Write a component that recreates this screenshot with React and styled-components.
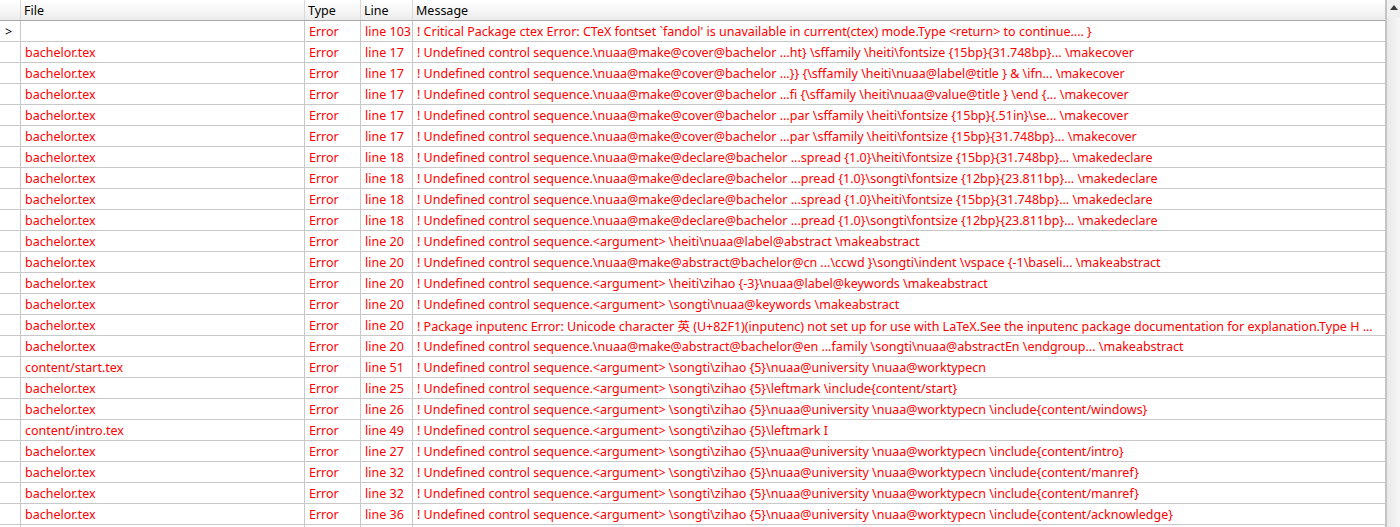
import styled, { createGlobalStyle } from "styled-components";

const entries = [
  { file: "", line: "line 103", msg: "! Critical Package ctex Error: CTeX fontset `fandol' is unavailable in current(ctex) mode.Type <return> to continue.... }", current: true },
  { file: "bachelor.tex", line: "line 17", msg: "! Undefined control sequence.\\nuaa@make@cover@bachelor ...ht} \\sffamily \\heiti\\fontsize {15bp}{31.748bp}... \\makecover" },
  { file: "bachelor.tex", line: "line 17", msg: "! Undefined control sequence.\\nuaa@make@cover@bachelor ...}} {\\sffamily \\heiti\\nuaa@label@title } & \\ifn... \\makecover" },
  { file: "bachelor.tex", line: "line 17", msg: "! Undefined control sequence.\\nuaa@make@cover@bachelor ...fi {\\sffamily \\heiti\\nuaa@value@title } \\end {... \\makecover" },
  { file: "bachelor.tex", line: "line 17", msg: "! Undefined control sequence.\\nuaa@make@cover@bachelor ...par \\sffamily \\heiti\\fontsize {15bp}{.51in}\\se... \\makecover" },
  { file: "bachelor.tex", line: "line 17", msg: "! Undefined control sequence.\\nuaa@make@cover@bachelor ...par \\sffamily \\heiti\\fontsize {15bp}{31.748bp}... \\makecover" },
  { file: "bachelor.tex", line: "line 18", msg: "! Undefined control sequence.\\nuaa@make@declare@bachelor ...spread {1.0}\\heiti\\fontsize {15bp}{31.748bp}... \\makedeclare" },
  { file: "bachelor.tex", line: "line 18", msg: "! Undefined control sequence.\\nuaa@make@declare@bachelor ...pread {1.0}\\songti\\fontsize {12bp}{23.811bp}... \\makedeclare" },
  { file: "bachelor.tex", line: "line 18", msg: "! Undefined control sequence.\\nuaa@make@declare@bachelor ...spread {1.0}\\heiti\\fontsize {15bp}{31.748bp}... \\makedeclare" },
  { file: "bachelor.tex", line: "line 18", msg: "! Undefined control sequence.\\nuaa@make@declare@bachelor ...pread {1.0}\\songti\\fontsize {12bp}{23.811bp}... \\makedeclare" },
  { file: "bachelor.tex", line: "line 20", msg: "! Undefined control sequence.<argument> \\heiti\\nuaa@label@abstract \\makeabstract" },
  { file: "bachelor.tex", line: "line 20", msg: "! Undefined control sequence.\\nuaa@make@abstract@bachelor@cn ...\\ccwd }\\songti\\indent \\vspace {-1\\baseli... \\makeabstract" },
  { file: "bachelor.tex", line: "line 20", msg: "! Undefined control sequence.<argument> \\heiti\\zihao {-3}\\nuaa@label@keywords \\makeabstract" },
  { file: "bachelor.tex", line: "line 20", msg: "! Undefined control sequence.<argument> \\songti\\nuaa@keywords \\makeabstract" },
  { file: "bachelor.tex", line: "line 20", msg: "! Package inputenc Error: Unicode character 英 (U+82F1)(inputenc) not set up for use with LaTeX.See the inputenc package documentation for explanation.Type H ..." },
  { file: "bachelor.tex", line: "line 20", msg: "! Undefined control sequence.\\nuaa@make@abstract@bachelor@en ...family \\songti\\nuaa@abstractEn \\endgroup... \\makeabstract" },
  { file: "content/start.tex", line: "line 51", msg: "! Undefined control sequence.<argument> \\songti\\zihao {5}\\nuaa@university \\nuaa@worktypecn" },
  { file: "bachelor.tex", line: "line 25", msg: "! Undefined control sequence.<argument> \\songti\\zihao {5}\\leftmark \\include{content/start}" },
  { file: "bachelor.tex", line: "line 26", msg: "! Undefined control sequence.<argument> \\songti\\zihao {5}\\nuaa@university \\nuaa@worktypecn \\include{content/windows}" },
  { file: "content/intro.tex", line: "line 49", msg: "! Undefined control sequence.<argument> \\songti\\zihao {5}\\leftmark I" },
  { file: "bachelor.tex", line: "line 27", msg: "! Undefined control sequence.<argument> \\songti\\zihao {5}\\nuaa@university \\nuaa@worktypecn \\include{content/intro}" },
  { file: "bachelor.tex", line: "line 32", msg: "! Undefined control sequence.<argument> \\songti\\zihao {5}\\nuaa@university \\nuaa@worktypecn \\include{content/manref}" },
  { file: "bachelor.tex", line: "line 32", msg: "! Undefined control sequence.<argument> \\songti\\zihao {5}\\nuaa@university \\nuaa@worktypecn \\include{content/manref}" },
  { file: "bachelor.tex", line: "line 36", msg: "! Undefined control sequence.<argument> \\songti\\zihao {5}\\nuaa@university \\nuaa@worktypecn \\include{content/acknowledge}" },
  // next row only peeks in at the bottom edge
  { file: "", line: "", msg: "", type: "" },
];

export default function App() {
  return (
    <>
      <GlobalStyle />
      <Window>
        <Table>
          <HeaderRow>
            <HeadCell />
            <HeadCell>File</HeadCell>
            <HeadCell>Type</HeadCell>
            <HeadCell>Line</HeadCell>
            <HeadCell>Message</HeadCell>
          </HeaderRow>
          {entries.map((entry, i) => (
            <Row key={i}>
              <Marker>{entry.current ? ">" : ""}</Marker>
              <Cell>{entry.file}</Cell>
              <Cell>{entry.type ?? "Error"}</Cell>
              <Cell>{entry.line}</Cell>
              <Cell>{entry.msg}</Cell>
            </Row>
          ))}
        </Table>
        <ScrollBar>
          <ArrowButton>
            <svg width="8" height="5" viewBox="0 0 8 5">
              <path d="M0 5 L4 0 L8 5 Z" fill="#3c3c3c" />
            </svg>
          </ArrowButton>
        </ScrollBar>
      </Window>
    </>
  );
}

const GlobalStyle = createGlobalStyle`
  html, body {
    margin: 0;
    padding: 0;
    background: #ffffff;
    overflow: hidden;
  }
  body {
    font-family: "Noto Sans", "Noto Sans CJK SC", sans-serif;
    font-size: 12.5px;
  }
`;

const Window = styled.div`
  display: flex;
  width: 1400px;
  height: 527px;
  overflow: hidden;
  background: #ffffff;
`;

const Table = styled.div`
  flex: 1;
  display: flex;
  flex-direction: column;
  overflow: hidden;
  border-right: 2px solid #c4c4c4;
`;

const columns = "21px 284px 56px 52px 1fr";

const HeaderRow = styled.div`
  display: grid;
  grid-template-columns: ${columns};
  height: 21px;
  flex-shrink: 0;
  background: linear-gradient(to bottom, #ffffff 0%, #f7f7f7 50%, #ececec 100%);
  border-bottom: 1px solid #a8a8a8;
  box-sizing: border-box;
`;

const HeadCell = styled.div`
  display: flex;
  align-items: center;
  padding-left: 3px;
  color: #000000;
  border-right: 1px solid #d8d8d8;
  white-space: nowrap;
  overflow: hidden;
  &:last-child {
    border-right: none;
  }
`;

const Row = styled.div`
  display: grid;
  grid-template-columns: ${columns};
  height: 21px;
  flex-shrink: 0;
  box-sizing: border-box;
  border-bottom: 1px solid #c8c8c8;
`;

const Cell = styled.div`
  display: flex;
  align-items: center;
  padding-left: 4px;
  color: #ff0000;
  border-right: 1px solid #c8c8c8;
  white-space: nowrap;
  overflow: hidden;
  &:last-child {
    border-right: none;
  }
`;

const Marker = styled(Cell)`
  color: #000000;
  padding-left: 5px;
`;

const ScrollBar = styled.div`
  width: 13px;
  flex-shrink: 0;
  display: flex;
  flex-direction: column;
  background: linear-gradient(to right, #e9e9e9, #f6f6f6);
`;

const ArrowButton = styled.div`
  height: 17px;
  display: flex;
  justify-content: center;
  padding-top: 5px;
  box-sizing: border-box;
  background: #f0f0f0;
`;
